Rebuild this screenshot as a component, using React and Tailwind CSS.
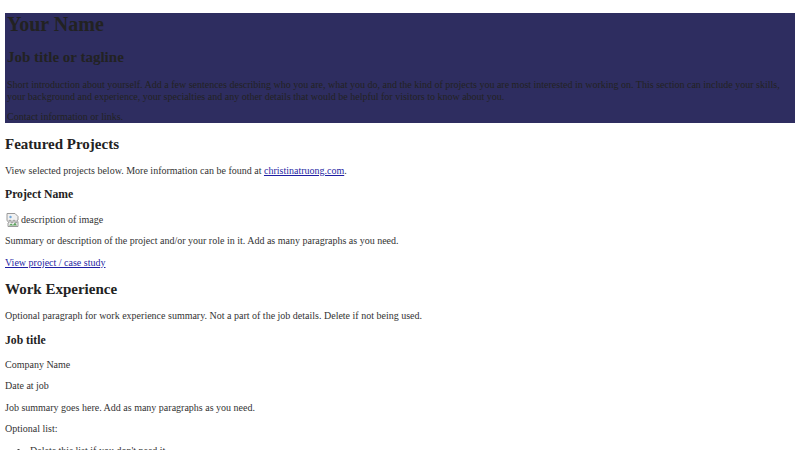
import React from 'react';

const BrokenImage = () => (
  <svg width="16" height="16" viewBox="0 0 16 16" className="-my-[3px] inline-block align-middle">
    <path d="M2 1.5h8l3 3V8l-2 1.5-2-1.5-2 1.5-2-1.5-2 1.5-1-.8z" fill="#f1f1f1" stroke="#9a9a9a" />
    <path d="M3 11l2-1.5 2 1.5 2-1.5 2 1.5 2-1.5v5H3z" fill="#f1f1f1" stroke="#9a9a9a" />
    <path d="M4 13.5l2-2 2 1.5 2-2.5 2 3z" fill="#5aa05a" />
    <circle cx="5.5" cy="5" r="1.2" fill="#6fa8dc" />
  </svg>
);

const App = () => {
  return (
    <div className="min-h-[450px] bg-white px-[5px] pt-[13px] font-['Liberation_Serif',serif] text-[10px] leading-[1.15] text-[#333]">
      {/* Header */}
      <header className="bg-[#2e2d60] px-[2px] text-[#222]">
        <h1 className="text-[20px] font-bold leading-[1.15]">Your Name</h1>
        <h2 className="mt-[13.4px] text-[15px] font-bold leading-[1.15]">Job title or tagline</h2>
        <p className="mt-[12.45px]">
          Short introduction about yourself. Add a few sentences describing who you are, what you do, and the kind of projects you are most interested in working on. This section can include your skills, your background and experience, your specialties and any other details that would be helpful for visitors to know about you.
        </p>
        <p className="pt-[9px]">Contact information or links.</p>
      </header>

      {/* Featured Projects */}
      <section>
        <h2 className="mt-[13px] text-[15px] font-bold text-[#222]">Featured Projects</h2>
        <p className="mt-[12.45px]">
          View selected projects below. More information can be found at{' '}
          <a href="#" className="text-[#1f1fa3] underline">christinatruong.com</a>.
        </p>
        <h3 className="mt-[11.7px] text-[11.7px] font-bold text-[#222]">Project Name</h3>
        <p className="mt-[11.7px]">
          <BrokenImage />description of image
        </p>
        <p className="mt-[10px]">
          Summary or description of the project and/or your role in it. Add as many paragraphs as you need.
        </p>
        <p className="mt-[10px]">
          <a href="#" className="text-[#1f1fa3] underline">View project / case study</a>
        </p>
      </section>

      {/* Work Experience */}
      <section>
        <h2 className="mt-[12.45px] text-[15px] font-bold text-[#222]">Work Experience</h2>
        <p className="mt-[12.45px]">
          Optional paragraph for work experience summary. Not a part of the job details. Delete if not being used.
        </p>
        <h3 className="mt-[11.7px] text-[11.7px] font-bold text-[#222]">Job title</h3>
        <p className="mt-[11.7px]">Company Name</p>
        <p className="mt-[10px]">Date at job</p>
        <p className="mt-[10px]">Job summary goes here. Add as many paragraphs as you need.</p>
        <p className="mt-[10px]">Optional list:</p>
        <ul className="mt-[10px] list-disc pl-[25px]">
          <li>Delete this list if you don't need it.</li>
          <li>Add more list items as needed.</li>
        </ul>
      </section>
    </div>
  );
};

export default App;
